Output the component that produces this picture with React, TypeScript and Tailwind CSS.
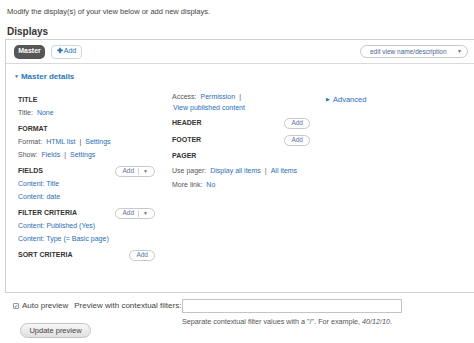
import React from 'react';

const link = 'text-[#2a6eb5]';

function AddButton({ dropdown }: { dropdown?: boolean }) {
  return (
    <span className="inline-flex h-[11px] items-center rounded-full border border-[#c8c8c8] bg-white px-[6px] text-[6.5px] leading-none text-[#5a74a0]">
      Add
      {dropdown && (
        <>
          <span className="mx-[4px] h-[7px] w-px bg-[#d4d4d4]" />
          <span className="text-[5px]">▼</span>
        </>
      )}
    </span>
  );
}

function Heading({ label, add, dropdown }: { label: string; add?: boolean; dropdown?: boolean }) {
  return (
    <div className="flex h-[16px] items-center justify-between pt-[2px]">
      <span className="text-[7px] font-bold uppercase text-[#333]">{label}</span>
      {add && <AddButton dropdown={dropdown} />}
    </div>
  );
}

function Item({ children }: { children: React.ReactNode }) {
  return <div className="flex h-[13px] items-center text-[7px] text-[#555]">{children}</div>;
}

function Sep() {
  return <span className="mx-[4px] text-[#555]">|</span>;
}

export default function App() {
  return (
    <div
      className="h-[343px] w-[474px] overflow-hidden bg-white text-[#333]"
      style={{ fontFamily: '"Liberation Sans", Arial, sans-serif' }}
    >
      <div className="pl-[7px] pt-[7px] text-[7.5px] leading-[9px] text-[#444]">
        Modify the display(s) of your view below or add new displays.
      </div>
      <div className="mt-[10px] pl-[7px] text-[10px] font-bold leading-[12px] text-[#333]">Displays</div>

      <div className="ml-[5px] mt-[1px] border-l border-t border-[#d0d0d0]">
        {/* display tabs */}
        <div className="flex h-[24px] items-center border-b border-[#dadada] pl-[8px] pr-[6px]">
          <span className="flex h-[14px] w-[31px] items-center justify-center rounded-[5px] bg-[#565656] text-[7px] font-bold text-white">
            Master
          </span>
          <span className="ml-[6px] flex h-[14px] w-[31px] items-center justify-center rounded-[4px] border border-[#c9d7e6] text-[7px] text-[#2a6eb5]">
            <span className="mr-[1px] text-[7px] font-bold">✚</span>Add
          </span>
          <span className="ml-auto flex h-[13px] w-[108px] items-center justify-between rounded-full border border-[#c8c8c8] pl-[9px] pr-[5px] text-[6.5px] text-[#4b6591]">
            edit view name/description
            <span className="text-[5px]">▼</span>
          </span>
        </div>

        {/* details */}
        <div className="h-[229px] border-b border-[#d0d0d0] pl-[8px]">
          <div className="flex h-[26px] items-center text-[8px] font-bold text-[#2878b8]">
            <span className="mr-[2px] text-[5px]">▼</span>Master details
          </div>
          <div className="flex pl-[4px] pt-[1px]">
            <div className="w-[137px]">
              <Heading label="Title" />
              <Item>
                Title:<span className={`ml-[4px] ${link}`}>None</span>
              </Item>
              <Heading label="Format" />
              <Item>
                Format:<span className={`ml-[4px] ${link}`}>HTML list</span>
                <Sep />
                <span className={link}>Settings</span>
              </Item>
              <Item>
                Show:<span className={`ml-[4px] ${link}`}>Fields</span>
                <Sep />
                <span className={link}>Settings</span>
              </Item>
              <Heading label="Fields" add dropdown />
              <Item>
                <span className={link}>Content: Title</span>
              </Item>
              <Item>
                <span className={link}>Content: date</span>
              </Item>
              <Heading label="Filter criteria" add dropdown />
              <Item>
                <span className={link}>Content: Published (Yes)</span>
              </Item>
              <Item>
                <span className={link}>Content: Type (= Basic page)</span>
              </Item>
              <Heading label="Sort criteria" add />
            </div>

            <div className="ml-[17px] w-[138px]">
              <div className="text-[7px] leading-[11px] text-[#555]">
                <div>
                  Access:<span className={`ml-[4px] ${link}`}>Permission</span>
                  <Sep />
                </div>
                <div className={`pl-[1px] ${link}`}>View published content</div>
              </div>
              <div className="mt-[2px] flex h-[17px] items-center justify-between">
                <span className="text-[7px] font-bold text-[#333]">HEADER</span>
                <AddButton />
              </div>
              <div className="flex h-[17px] items-center justify-between">
                <span className="text-[7px] font-bold text-[#333]">FOOTER</span>
                <AddButton />
              </div>
              <div className="flex h-[15px] items-center text-[7px] font-bold text-[#333]">PAGER</div>
              <div className="flex h-[14px] items-center text-[7px] text-[#555]">
                Use pager:<span className={`ml-[4px] ${link}`}>Display all items</span>
                <Sep />
                <span className={link}>All items</span>
              </div>
              <div className="flex h-[14px] items-center text-[7px] text-[#555]">
                More link:<span className={`ml-[4px] ${link}`}>No</span>
              </div>
            </div>

            <div className="ml-[16px] flex h-[18px] items-center text-[7.5px] text-[#2a6eb5]">
              <span className="mr-[3px] text-[5px]">▶</span>Advanced
            </div>
          </div>
        </div>
      </div>

      {/* preview controls */}
      <div className="flex items-start pl-[13px] pt-[6px]">
        <div className="flex h-[14px] w-[169px] items-center text-[8px] text-[#444]">
          <span className="flex h-[6px] w-[6px] items-center justify-center rounded-[1px] border border-[#999] bg-white text-[5px] leading-none text-[#333]">
            ✓
          </span>
          <span className="ml-[3px]">Auto preview</span>
          <span className="ml-[6px]">Preview with contextual filters:</span>
        </div>
        <div>
          <div className="h-[14px] w-[220px] border border-[#c4c4c4] bg-white" />
          <div className="mt-[4px] text-[7.2px] leading-[9px] text-[#555]">
            Separate contextual filter values with a "/". For example, <em>40/12/10</em>.
          </div>
        </div>
      </div>
      <div className="pl-[20px]">
        <span className="mt-[-3px] flex h-[15px] w-[71px] items-center justify-center rounded-full border border-[#c4c4c4] bg-gradient-to-b from-[#f7f7f7] to-[#e0e0e0] text-[7.5px] text-[#444]">
          Update preview
        </span>
      </div>
    </div>
  );
}
